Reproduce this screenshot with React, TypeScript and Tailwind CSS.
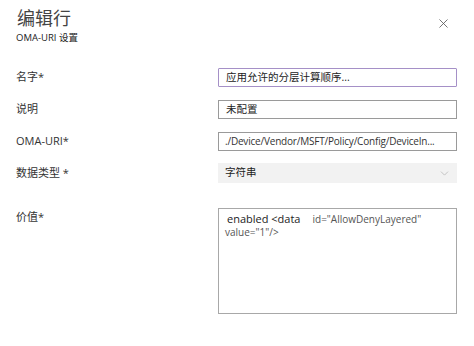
import { X, ChevronDown } from 'lucide-react'

const FONT = { fontFamily: '"Open Sans", "Noto Sans CJK SC", sans-serif' }

function Row({ label, children, className = '' }: { label: string; children: React.ReactNode; className?: string }) {
  return (
    <div className={`flex items-center ${className}`}>
      <div className="w-[218px] pl-[16px] text-[11px] text-[#333]">{label}</div>
      {children}
    </div>
  )
}

export default function App() {
  return (
    <div className="w-[474px] h-[346px] bg-white relative" style={FONT}>
      <div className="flex justify-between pl-[17px] pr-[23px] pt-[5px]">
        <div>
          <div className="text-[18px] leading-[26px] text-[#444]">编辑行</div>
          <div className="text-[9.5px] leading-[12px] text-[#222] -ml-[1px] mt-[1px]">OMA-URI 设置</div>
        </div>
        <X className="w-[15px] h-[15px] mt-[11px] text-[#555]" strokeWidth={1.3} />
      </div>

      <div className="mt-[24px] flex flex-col">
        <Row label="名字*">
          <div className="w-[239px] h-[19px] border border-[#a590c7] rounded-[1px] px-[7px] text-[10.5px] leading-[17px] text-[#222]">
            应用允许的分层计算顺序...
          </div>
        </Row>
        <Row label="说明" className="mt-[13px]">
          <div className="w-[239px] h-[19px] border border-[#9a9a9a] px-[7px] text-[10.5px] leading-[17px] text-[#222]">
            未配置
          </div>
        </Row>
        <Row label="OMA-URI*" className="mt-[13px]">
          <div className="w-[239px] h-[19px] border border-[#9a9a9a] px-[6px] text-[10px] leading-[17px] text-[#333] whitespace-nowrap overflow-hidden tracking-[-0.2px]">
            ./Device/Vendor/MSFT/Policy/Config/DeviceIn...
          </div>
        </Row>
        <Row label="数据类型 *" className="mt-[12px]">
          <div className="w-[239px] h-[20px] bg-[#f2f2f2] pl-[7px] pr-[6px] flex items-center justify-between text-[10.5px] text-[#222]">
            <span>字符串</span>
            <ChevronDown className="w-[13px] h-[13px] text-[#aaa]" strokeWidth={1.2} />
          </div>
        </Row>
        <div className="flex items-start mt-[25px]">
          <div className="w-[218px] pl-[16px] text-[11px] text-[#333] pt-[1px]">价值*</div>
          <div className="w-[239px] h-[106px] border border-[#a8a8a8] px-[6px] pt-[3px] text-[10px]">
            <div className="whitespace-nowrap flex items-baseline leading-[14px]">
              <span className="text-[#222] text-[11px] ml-[2px]">enabled &lt;data</span>
              <span className="text-[#555] ml-[12px]">id="AllowDenyLayered"</span>
            </div>
            <div className="text-[#555] leading-[13px]">value="1"/&gt;</div>
          </div>
        </div>
      </div>
    </div>
  )
}
